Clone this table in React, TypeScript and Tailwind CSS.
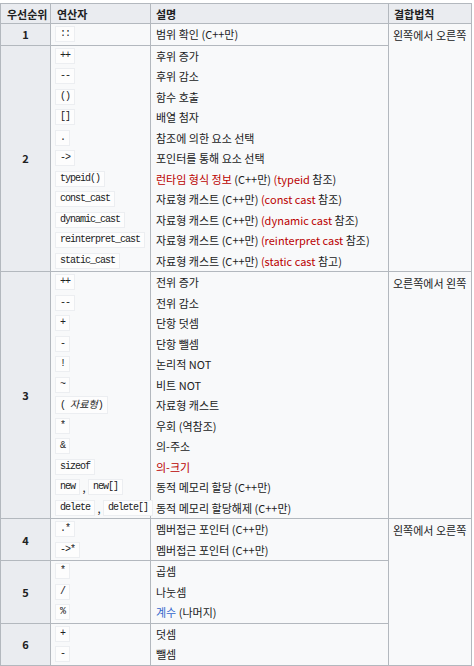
import React from "react";

type Seg = string | { t: string; c?: "red" | "blue" };
type Op = { op: React.ReactNode; desc: Seg[] };

const C = ({ children }: { children: React.ReactNode }) => (
  <code className="inline-block bg-[#fdfdfd] border border-[#eceef1] px-[4px] leading-[14px] text-[10px] tracking-[-1px] text-[#202122] [font-family:'Liberation_Mono',monospace]">
    {children}
  </code>
);

const R = (t: string): Seg => ({ t, c: "red" });

const cast = (name: string, tail = "참조)"): Seg[] => [
  "자료형 캐스트 (C++만) ",
  R(`(${name}`),
  ` ${tail}`,
];

const groups: { p: string; ops: Op[] }[] = [
  { p: "1", ops: [{ op: <C>::</C>, desc: ["범위 확인 (C++만)"] }] },
  {
    p: "2",
    ops: [
      { op: <C>++</C>, desc: ["후위 증가"] },
      { op: <C>--</C>, desc: ["후위 감소"] },
      { op: <C>()</C>, desc: ["함수 호출"] },
      { op: <C>[]</C>, desc: ["배열 첨자"] },
      { op: <C>.</C>, desc: ["참조에 의한 요소 선택"] },
      { op: <C>-&gt;</C>, desc: ["포인터를 통해 요소 선택"] },
      { op: <C>typeid()</C>, desc: [R("런타임 형식 정보"), " (C++만) ", R("(typeid"), " 참조)"] },
      { op: <C>const_cast</C>, desc: cast("const cast") },
      { op: <C>dynamic_cast</C>, desc: cast("dynamic cast") },
      { op: <C>reinterpret_cast</C>, desc: cast("reinterpret cast") },
      { op: <C>static_cast</C>, desc: cast("static cast", "참고)") },
    ],
  },
  {
    p: "3",
    ops: [
      { op: <C>++</C>, desc: ["전위 증가"] },
      { op: <C>--</C>, desc: ["전위 감소"] },
      { op: <C>+</C>, desc: ["단항 덧셈"] },
      { op: <C>-</C>, desc: ["단항 뺄셈"] },
      { op: <C>!</C>, desc: ["논리적 NOT"] },
      { op: <C>~</C>, desc: ["비트 NOT"] },
      {
        op: (
          <C>
            ( <i className="[font-family:'Noto_Sans_CJK_KR',sans-serif] tracking-normal">자료형</i>)
          </C>
        ),
        desc: ["자료형 캐스트"],
      },
      { op: <C>*</C>, desc: ["우회 (역참조)"] },
      { op: <C>&amp;</C>, desc: ["의-주소"] },
      { op: <C>sizeof</C>, desc: [R("의-크기")] },
      {
        op: (
          <>
            <C>new</C>&nbsp;,&nbsp;<C>new[]</C>
          </>
        ),
        desc: ["동적 메모리 할당 (C++만)"],
      },
      {
        op: (
          <>
            <C>delete</C>&nbsp;,&nbsp;<C>delete[]</C>
          </>
        ),
        desc: ["동적 메모리 할당해제 (C++만)"],
      },
    ],
  },
  {
    p: "4",
    ops: [
      { op: <C>.*</C>, desc: ["멤버접근 포인터 (C++만)"] },
      { op: <C>-&gt;*</C>, desc: ["멤버접근 포인터 (C++만)"] },
    ],
  },
  {
    p: "5",
    ops: [
      { op: <C>*</C>, desc: ["곱셈"] },
      { op: <C>/</C>, desc: ["나눗셈"] },
      { op: <C>%</C>, desc: [{ t: "계수", c: "blue" }, " (나머지)"] },
    ],
  },
  {
    p: "6",
    ops: [
      { op: <C>+</C>, desc: ["덧셈"] },
      { op: <C>-</C>, desc: ["뺄셈"] },
    ],
  },
];

const assoc: Record<string, { text: string; span: number }> = {
  "1": { text: "왼쪽에서 오른쪽", span: 12 },
  "3": { text: "오른쪽에서 왼쪽", span: 12 },
  "4": { text: "왼쪽에서 오른쪽", span: 7 },
};

const B = "border-[#b3b8be]";

export default function App() {
  return (
    <div className="w-[474px] h-[666px] bg-white pt-[3px] overflow-hidden [font-family:'Noto_Sans_CJK_KR','Noto_Sans',sans-serif] text-[11px] leading-[14px] text-[#202122]">
      <table className={`border-collapse table-fixed w-[471px] border ${B} bg-[#f8f9fa]`}>
        <colgroup>
          <col className="w-[50px]" />
          <col className="w-[100px]" />
          <col className="w-[238px]" />
          <col className="w-[83px]" />
        </colgroup>
        <thead>
          <tr className="bg-[#eaecf0]">
            <th className={`border ${B} text-left pl-[6px] p-0 font-bold`}>
              <div className="h-[19px] flex items-center">우선순위</div>
            </th>
            <th className={`border ${B} text-left pl-[6px] p-0 font-bold`}>
              <div className="h-[19px] flex items-center">연산자</div>
            </th>
            <th className={`border ${B} text-left pl-[5px] p-0 font-bold`}>
              <div className="h-[19px] flex items-center">설명</div>
            </th>
            <th className={`border ${B} text-left pl-[5px] p-0 font-bold`}>
              <div className="h-[19px] flex items-center">결합법칙</div>
            </th>
          </tr>
        </thead>
        <tbody>
          {groups.map((g) =>
            g.ops.map((o, i) => (
              <tr key={g.p + "-" + i}>
                {i === 0 && (
                  <th
                    rowSpan={g.ops.length}
                    className={`border ${B} bg-[#eaecf0] text-center align-middle p-0 font-bold`}
                  >
                    {g.p}
                  </th>
                )}
                <td
                  className={`border-l border-r ${B} ${i === 0 ? `border-t ${B}` : ""} ${
                    i === g.ops.length - 1 ? `border-b ${B}` : ""
                  } p-0 pl-[4px] whitespace-nowrap`}
                >
                  <div className="h-[20.5px] flex items-center">{o.op}</div>
                </td>
                <td
                  className={`border-l border-r ${B} ${i === 0 ? `border-t ${B}` : ""} ${
                    i === g.ops.length - 1 ? `border-b ${B}` : ""
                  } p-0 pl-[5px] whitespace-nowrap`}
                >
                  <div className="h-[20.5px] flex items-center">
                    <span>
                      {o.desc.map((s, k) =>
                        typeof s === "string" ? (
                          <span key={k}>{s}</span>
                        ) : (
                          <span key={k} className={s.c === "red" ? "text-[#ba0000]" : "text-[#3366cc]"}>
                            {s.t}
                          </span>
                        )
                      )}
                    </span>
                  </div>
                </td>
                {i === 0 && assoc[g.p] && (
                  <td rowSpan={assoc[g.p].span} className={`border ${B} align-top p-0 pl-[4px] pt-[4px] whitespace-nowrap`}>
                    {assoc[g.p].text}
                  </td>
                )}
              </tr>
            ))
          )}
        </tbody>
      </table>
    </div>
  );
}
